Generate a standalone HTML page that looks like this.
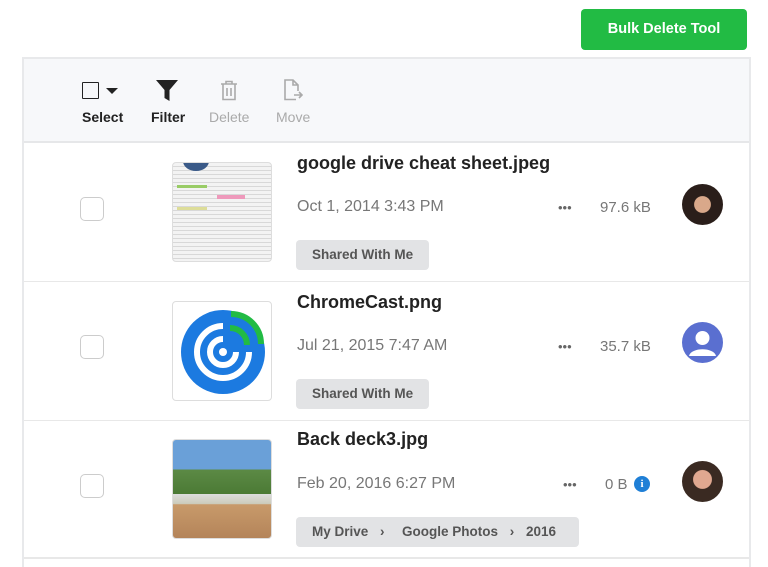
<!DOCTYPE html>
<html><head><meta charset="utf-8"><style>
*{margin:0;padding:0;box-sizing:border-box}
body{width:768px;height:561px;background:#fff;font-family:"Liberation Sans",sans-serif;position:relative;overflow:hidden;color:#222}
.abs{position:absolute}
.btn{left:581px;top:9px;width:166px;height:41px;background:#22bb44;border-radius:4px;color:#fff;font-weight:bold;font-size:14.5px;text-align:center;line-height:41px}
.box{left:22px;top:57px;width:729px;height:510px;border:2px solid #e8e9eb;border-bottom:none}
.tb{left:24px;top:59px;width:725px;height:84px;background:#f7f8fa;border-bottom:2px solid #e6e7e9}
.tl{font-size:14px;font-weight:bold;top:109px}
.row{left:24px;width:725px;height:139px;border-bottom:1px solid #e8e8e8}
.cb{position:absolute;left:56px;width:24px;height:24px;border:1.5px solid #ccc;border-radius:5px}
.thumb{position:absolute;left:148px;width:100px;height:100px;border:1px solid #ddd;border-radius:4px;overflow:hidden}
.name{position:absolute;left:273px;font-size:18px;font-weight:bold;color:#222}
.date{position:absolute;left:273px;font-size:16px;color:#777}
.tag{position:absolute;left:272px;height:30px;background:#e2e3e5;border-radius:4px;font-size:13.5px;font-weight:bold;color:#555;line-height:30px;padding:0 16px}
.dots{position:absolute;font-size:13px;color:#666;letter-spacing:0px}
.size{position:absolute;font-size:15px;color:#777}
.av{position:absolute;left:658px;width:41px;height:41px;border-radius:50%;overflow:hidden}
</style></head><body>
<div class="abs btn">Bulk Delete Tool</div>
<div class="abs box"></div>
<div class="abs tb"></div>
<div class="abs" style="left:82px;top:82px;width:17px;height:17px;border:1.5px solid #222;border-radius:1px"></div>
<div class="abs" style="left:106px;top:88px;width:0;height:0;border-left:6px solid transparent;border-right:6px solid transparent;border-top:6px solid #222"></div>
<div class="abs tl" style="left:82px">Select</div>
<svg class="abs" style="left:156px;top:80px" width="22" height="21"><path d="M0 0H22L13.5 10V21L8.5 18V10Z" fill="#222"/></svg>
<div class="abs tl" style="left:151px">Filter</div>
<svg class="abs" style="left:220px;top:80px" width="18" height="21" fill="none" stroke="#aaa" stroke-width="1.6"><path d="M1 4H17M6 4V1.5H12V4M3 4V19.5H15V4M7 8V16M11 8V16"/></svg>
<div class="abs tl" style="left:209px;color:#aaa;font-weight:normal">Delete</div>
<svg class="abs" style="left:283px;top:79px" width="20" height="22" fill="none" stroke="#aaa" stroke-width="1.6"><path d="M13 20.5H2V1H10L15 6V12M10 1V6H15M11 16H19M16 13L19 16L16 19"/></svg>
<div class="abs tl" style="left:276px;color:#aaa;font-weight:normal">Move</div>

<div class="abs row" style="top:143px">
 <div class="cb" style="top:54px"></div>
 <div class="thumb" style="top:19px;background:repeating-linear-gradient(180deg,#f3f3f3 0 3px,#d8d8d8 3px 4px)">
  <div style="position:absolute;left:10px;top:-12px;width:26px;height:20px;border-radius:50%;background:#3a5a88"></div>
  <div style="position:absolute;left:4px;top:22px;width:30px;height:3px;background:#9c6"></div>
  <div style="position:absolute;left:4px;top:44px;width:30px;height:3px;background:#dd9"></div>
  <div style="position:absolute;left:44px;top:32px;width:28px;height:4px;background:#e9b"></div>
 </div>
 <div class="name" style="top:10px">google drive cheat sheet.jpeg</div>
 <div class="date" style="top:55px">Oct 1, 2014 3:43 PM</div>
 <div class="tag" style="top:97px">Shared With Me</div>
 <div class="dots" style="left:534px;top:57px">•••</div>
 <div class="size" style="left:576px;top:56px">97.6 kB</div>
 <div class="av" style="top:41px;background:radial-gradient(circle at 50% 50%,#d9a88a 0 28%,#2a1e1a 30%);"></div>
</div>
<div class="abs row" style="top:282px">
 <div class="cb" style="top:53px"></div>
 <div class="thumb" style="top:19px">
  <svg width="100" height="100"><circle cx="50" cy="50" r="42" fill="#1c7ae0"/>
   <g fill="none" stroke="#fff" stroke-width="6"><path d="M50 24A26 26 0 1 0 76 50"/><path d="M50 37A13 13 0 1 0 63 50"/></g>
   <circle cx="50" cy="50" r="4" fill="#fff"/>
   <g fill="none" stroke="#22bb44" stroke-width="6"><path d="M58 12A30 30 0 0 1 88 42"/><path d="M57 26A17 17 0 0 1 74 43"/></g>
  </svg>
 </div>
 <div class="name" style="top:10px">ChromeCast.png</div>
 <div class="date" style="top:55px">Jul 21, 2015 7:47 AM</div>
 <div class="tag" style="top:97px">Shared With Me</div>
 <div class="dots" style="left:534px;top:57px">•••</div>
 <div class="size" style="left:576px;top:56px">35.7 kB</div>
 <div class="av" style="top:40px;background:#5a6fd0"><svg width="41" height="41"><circle cx="20.5" cy="16" r="7" fill="#fff"/><path d="M7 34C9 25 32 25 34 34Z" fill="#fff"/></svg></div>
</div>
<div class="abs row" style="top:421px;border-bottom:2px solid #e8e8e8;height:138px">
 <div class="cb" style="top:53px"></div>
 <div class="thumb" style="top:18px;background:linear-gradient(180deg,#6aa0d8 0,#6aa0d8 30%,#5c8a45 30%,#4b7a35 55%,#ddd 55%,#ccb 65%,#c89a6a 66%,#b4845a 100%)"></div>
 <div class="name" style="top:8px">Back deck3.jpg</div>
 <div class="date" style="top:54px">Feb 20, 2016 6:27 PM</div>
 <div class="tag" style="top:96px;padding:0;width:283px;display:flex">
  <span style="padding:0 0 0 16px;width:94px">My Drive <span style="margin-left:8px">&#8250;</span></span>
  <span style="padding-left:12px;width:126px">Google Photos <span style="margin-left:8px">&#8250;</span></span>
  <span style="padding-left:10px">2016</span>
 </div>
 <div class="dots" style="left:539px;top:56px">•••</div>
 <div class="size" style="left:581px;top:55px">0 B</div>
 <div class="abs" style="left:610px;top:55px;width:16px;height:16px;border-radius:50%;background:#1f7fd6;color:#fff;font-size:11px;font-weight:bold;text-align:center;line-height:16px;font-family:'Liberation Serif',serif">i</div>
 <div class="av" style="top:40px;background:radial-gradient(circle at 50% 45%,#e0a890 0 30%,#3a2a22 32%)"></div>
</div>
</body></html>
